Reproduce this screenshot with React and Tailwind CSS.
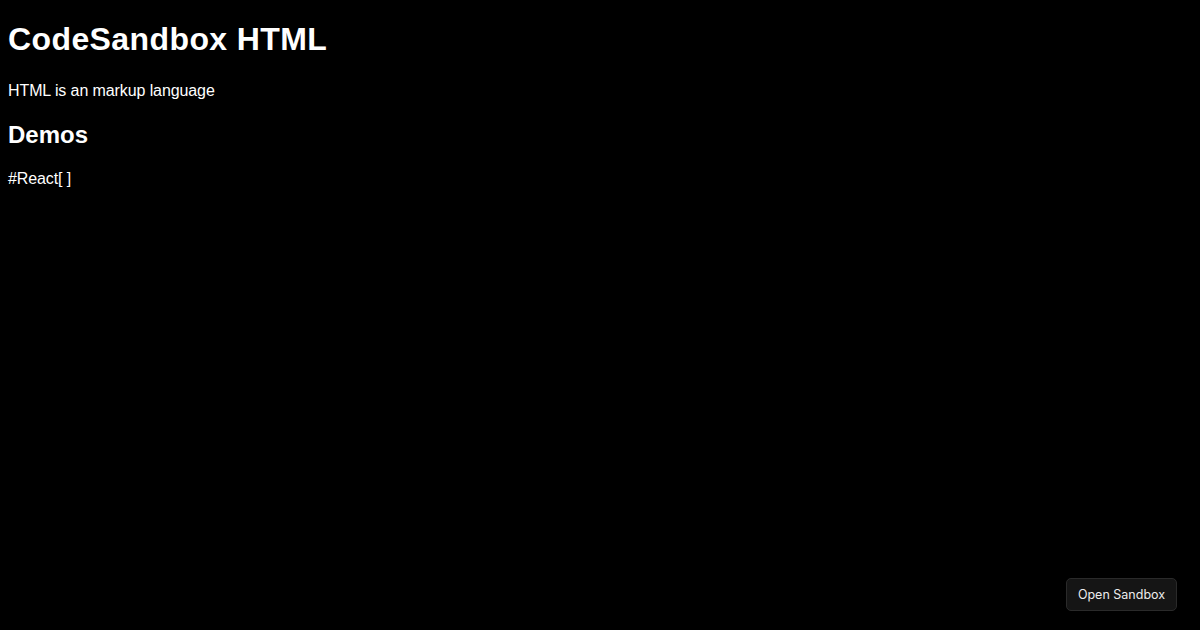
export default function App() {
  return (
    <div className="relative min-h-screen w-full bg-black text-white" style={{ height: 630 }}>
      <div className="px-2 pt-[21px]" style={{ fontFamily: '"Liberation Sans", Arial, sans-serif' }}>
        <h1 className="text-[32px] font-bold leading-[36.8px] tracking-[0.4px]">CodeSandbox HTML</h1>
        <p className="mt-[24px] text-[16px] leading-[18.4px] tracking-[-0.1px]">HTML is an markup language</p>
        <h2 className="mt-[21px] text-[24px] font-bold leading-[27.6px]">Demos</h2>
        <p className="mt-[21px] text-[16px] leading-[18.4px] tracking-[-0.1px]">#React[ ]</p>
      </div>
      <button
        className="absolute right-[23px] bottom-[19px] h-[33px] w-[111px] rounded-[5px] border border-[#2a2a2a] bg-[#151515] pt-[2px] text-[12.5px] text-[#ececec]"
        style={{ fontFamily: 'Inter, "Liberation Sans", sans-serif' }}
      >
        Open Sandbox
      </button>
    </div>
  );
}
